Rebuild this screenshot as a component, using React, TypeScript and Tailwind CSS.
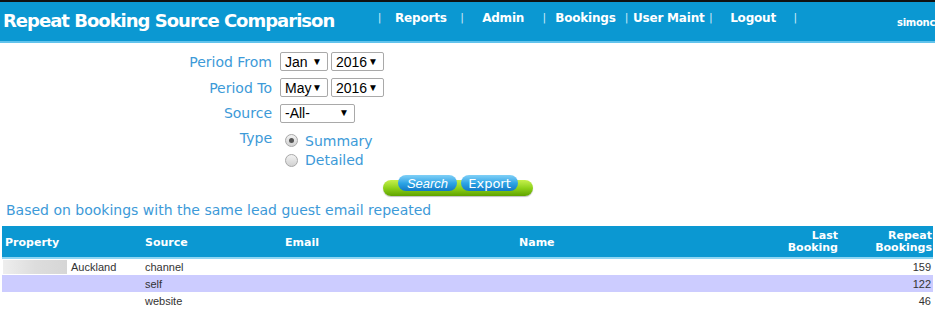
import React from "react";

const navItems = [
  { label: "Reports", w: "w-[83px]" },
  { label: "Admin", w: "w-[83px]" },
  { label: "Bookings", w: "w-[83px]" },
  { label: "User Maint", w: "w-[85px]" },
  { label: "Logout", w: "w-[85px]" },
];

function Sel({ value, w }: { value: string; w: string }) {
  return (
    <div
      className={`${w} h-[19px] flex items-center justify-between border border-[#a9a9a9] rounded-[2px] bg-white pl-[4px] pr-[5px] text-[14px] leading-none text-black`}
      style={{ fontFamily: '"Liberation Sans", Arial, sans-serif' }}
    >
      <span>{value}</span>
      <span className="text-[10px]">▼</span>
    </div>
  );
}

function Radio({ checked }: { checked?: boolean }) {
  return (
    <div className="w-[13px] h-[13px] rounded-full border border-[#a8a8a8] bg-gradient-to-b from-[#f2f2f2] to-[#d2d2d2] flex items-center justify-center">
      {checked && <div className="w-[5px] h-[5px] rounded-full bg-[#555]" />}
    </div>
  );
}

const rows = [
  { prop: true, source: "channel", n: "159", bg: "bg-white" },
  { prop: false, source: "self", n: "122", bg: "bg-[#ccccff]" },
  { prop: false, source: "website", n: "46", bg: "bg-white" },
];

export default function App() {
  const dv = { fontFamily: '"DejaVu Sans", Verdana, sans-serif' };
  const lib = { fontFamily: '"Liberation Sans", Arial, sans-serif' };
  return (
    <div className="w-[935px] bg-white" style={dv}>
      {/* Header */}
      <div className="h-[43px] border-t-2 border-[#111] border-b-2 border-b-[#62c3ec] bg-[#0b98d2] flex items-start text-white overflow-hidden">
        <div className="w-[381px] pl-[3px] pt-[8px] text-[18px] font-bold tracking-[-1px] leading-[22px] whitespace-nowrap">
          Repeat Booking Source Comparison
        </div>
        {navItems.map((n) => (
          <div key={n.label} className={`${n.w} flex items-center pt-[9px]`}>
            <span className="text-[11px] text-[#cfe9f7] font-normal leading-[14px]">|</span>
            <span className="flex-1 text-center text-[12px] font-bold leading-[14px] tracking-[-0.2px] whitespace-nowrap">
              {n.label}
            </span>
          </div>
        ))}
        <div className="flex items-center pt-[9px]">
          <span className="text-[11px] text-[#cfe9f7] leading-[14px]">|</span>
        </div>
        <div className="ml-[100px] pt-[15px] text-[10px] font-bold leading-[12px] tracking-[-0.3px] whitespace-nowrap">simonc</div>
      </div>

      {/* Form */}
      <div className="pt-[9px] text-[14px] text-[#3d9ad8]">
        <div className="flex items-center h-[19px]">
          <div className="w-[272px] text-right leading-none">Period From</div>
          <div className="ml-[8px] flex gap-[3px]">
            <Sel value="Jan" w="w-[48px]" />
            <Sel value="2016" w="w-[53px]" />
          </div>
        </div>
        <div className="flex items-center h-[19px] mt-[7px]">
          <div className="w-[272px] text-right leading-none">Period To</div>
          <div className="ml-[8px] flex gap-[3px]">
            <Sel value="May" w="w-[48px]" />
            <Sel value="2016" w="w-[53px]" />
          </div>
        </div>
        <div className="flex items-center h-[18px] mt-[7px]">
          <div className="w-[272px] text-right leading-none">Source</div>
          <div className="ml-[8px] flex">
            <Sel value="-All-" w="w-[75px]" />
          </div>
        </div>
        <div className="flex items-start mt-[8px]">
          <div className="w-[272px] text-right leading-[17px]">Type</div>
          <div className="ml-[13px] flex flex-col gap-[3px] pt-[2px]">
            <div className="flex items-center gap-[7px]">
              <Radio checked />
              <span className="leading-[15px] pt-[2px]">Summary</span>
            </div>
            <div className="flex items-center gap-[7px]">
              <Radio />
              <span className="leading-[15px] pt-[1px]">Detailed</span>
            </div>
          </div>
        </div>

        {/* Buttons */}
        <div className="flex justify-start pl-[383px] mt-[7px]">
          <div className="w-[150px] h-[16px] mt-[5px] rounded-full bg-gradient-to-b from-[#c6f04a] via-[#8fd21a] to-[#5fa300] flex items-start pl-[15px] gap-[4px] shadow-[0_1px_1px_rgba(0,0,0,0.25)]">
            <div className="-mt-[5px] w-[59px] h-[16px] rounded-full bg-gradient-to-b from-[#7fd0f7] via-[#2ea6e6] to-[#1278c6] flex items-center justify-center text-white text-[13px] italic leading-none" style={lib}>
              Search
            </div>
            <div className="-mt-[5px] w-[57px] h-[16px] rounded-full bg-gradient-to-b from-[#7fd0f7] via-[#2ea6e6] to-[#1278c6] flex items-center justify-center text-white text-[13px] leading-none">
              Export
            </div>
          </div>
        </div>

        <div className="pl-[6px] mt-[6px] leading-[17px]">
          Based on bookings with the same lead guest email repeated
        </div>
      </div>

      {/* Table */}
      <div className="pl-[2px] pt-[7px]">
        <table className="table-fixed border-collapse w-[931px]">
          <colgroup>
            <col className="w-[141px]" />
            <col className="w-[140px]" />
            <col className="w-[234px]" />
            <col className="w-[250px]" />
            <col className="w-[73px]" />
            <col className="w-[93px]" />
          </colgroup>
          <thead>
            <tr className="bg-[#0b98d2] text-white text-[11px] font-bold h-[32px] border-b-2 border-[#8fd6f3]">
              <th className="text-left pl-[3px] leading-[13px] pt-[2px]">Property</th>
              <th className="text-left pl-[2px] leading-[13px] pt-[2px]">Source</th>
              <th className="text-left pl-[2px] leading-[13px] pt-[2px]">Email</th>
              <th className="text-left pl-[2px] leading-[13px] pt-[2px]">Name</th>
              <th className="text-right pr-[2px] leading-[12px]">Last<br />Booking</th>
              <th className="text-right pr-[1px] leading-[12px]">Repeat<br />Bookings</th>
            </tr>
          </thead>
          <tbody className="text-[11px] text-[#333]" style={lib}>
            {rows.map((r, i) => (
              <tr key={i} className={`${r.bg} h-[17px]`}>
                <td className="pl-[1px]">
                  {r.prop && (
                    <div className="flex items-center">
                      <div className="w-[64px] h-[14px] bg-gradient-to-r from-[#eeeeee] via-[#dddddd] to-[#d6d6d6] blur-[0.6px]" />
                      <span className="ml-[4px] leading-[14px]">Auckland</span>
                    </div>
                  )}
                </td>
                <td className="pl-[2px] leading-[14px]">{r.source}</td>
                <td></td>
                <td></td>
                <td></td>
                <td className="text-right pr-[2px] leading-[14px]">{r.n}</td>
              </tr>
            ))}
          </tbody>
        </table>
      </div>
    </div>
  );
}
